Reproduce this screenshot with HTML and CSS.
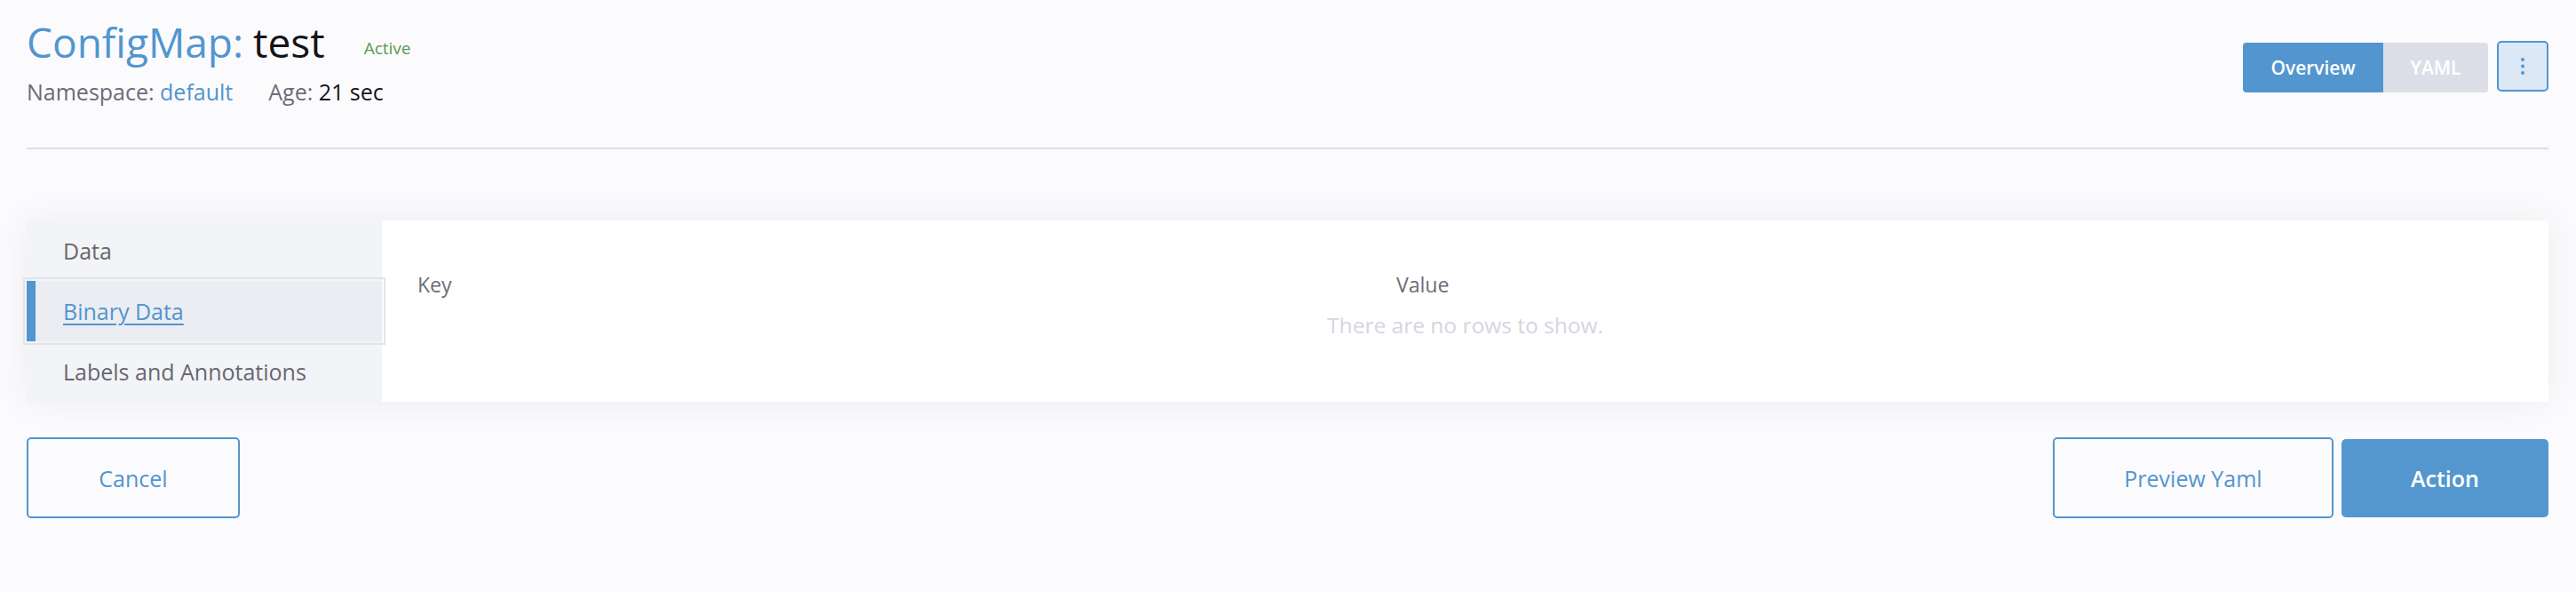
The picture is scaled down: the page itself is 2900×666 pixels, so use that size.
FILE: index.html
```html
<!DOCTYPE html>
<html lang="en">
<head>
<meta charset="utf-8">
<title>ConfigMap: test</title>
<link rel="stylesheet" href="styles.css">
</head>
<body>
<main class="page">
  <header class="masthead">
    <div class="title-block">
      <h1 class="title"><span class="kind">ConfigMap:</span> <span class="name">test</span><span class="badge">Active</span></h1>
      <div class="subtitle">
        <span class="meta">Namespace: <a class="link" href="#">default</a></span>
        <span class="meta">Age: <span class="value">21 sec</span></span>
      </div>
    </div>
    <div class="actions">
      <div class="segmented">
        <button class="seg seg-on">Overview</button>
        <button class="seg seg-off">YAML</button>
      </div>
      <button class="more" aria-label="More actions">
        <svg width="6" height="22" viewBox="0 0 6 22"><circle cx="3" cy="3" r="2" fill="#5295cf"/><circle cx="3" cy="10.5" r="2" fill="#5295cf"/><circle cx="3" cy="18" r="2" fill="#5295cf"/></svg>
      </button>
    </div>
  </header>
  <div class="divider"></div>
  <section class="tabbed">
    <nav class="tabs">
      <a class="tab" href="#">Data</a>
      <a class="tab tab-active" href="#">Binary Data</a>
      <a class="tab" href="#">Labels and Annotations</a>
    </nav>
    <div class="tab-body">
      <div class="table-head">
        <span class="col-key">Key</span>
        <span class="col-value">Value</span>
      </div>
      <div class="empty">There are no rows to show.</div>
    </div>
  </section>
  <footer class="footer">
    <button class="btn btn-outline btn-cancel">Cancel</button>
    <div class="footer-right">
      <button class="btn btn-outline btn-preview">Preview Yaml</button>
      <button class="btn btn-solid btn-action">Action</button>
    </div>
  </footer>
</main>
</body>
</html>
```
FILE: styles.css
```css
* { box-sizing: border-box; }
html, body { margin: 0; padding: 0; }
body {
  background: #fbfbfd;
  font-family: "Open Sans", Lato, "Liberation Sans", sans-serif;
  color: #141419;
}
.page {
  padding: 0 31px 0 30px;
}
.masthead {
  display: flex;
  justify-content: space-between;
  align-items: flex-start;
  height: 166px;
  padding-top: 18px;
}
.title {
  margin: 0;
  font-size: 46px;
  font-weight: 400;
  line-height: 58px;
  display: flex;
  align-items: baseline;
}
.kind { color: #5295cf; }
.name { color: #141419; margin-left: 11px; }
.badge {
  color: #5b9a52;
  font-size: 19px;
  margin-left: 44px;
  position: relative;
  top: -4px;
}
.subtitle {
  display: flex;
  gap: 40px;
  margin-top: 0;
  font-size: 25px;
  line-height: 32px;
}
.meta { color: #6c6c76; }
.link { color: #5295cf; text-decoration: none; }
.value { color: #141419; }
.actions {
  display: flex;
  align-items: flex-start;
  gap: 10px;
  padding-top: 28px;
}
.segmented {
  display: flex;
  margin-top: 2px;
  border-radius: 4px;
  overflow: hidden;
}
.seg {
  border: 0;
  height: 56px;
  font-family: inherit;
  font-size: 21px;
  font-weight: 600;
  color: #fff;
  padding: 0;
}
.seg-on { background: #5396cf; width: 158px; }
.seg-off { background: #dcdfe7; width: 118px; }
.more {
  width: 58px;
  height: 57px;
  border: 2px solid #5295cf;
  border-radius: 5px;
  background: #dce8f5;
  display: flex;
  align-items: center;
  justify-content: center;
  padding: 0;
}
.divider {
  height: 2px;
  background: #dcdee5;
}
.tabbed {
  display: flex;
  margin-top: 80px;
  height: 204px;
  box-shadow: 0 0 40px rgba(20, 20, 60, 0.06);
}
.tabs {
  width: 400px;
  background: #f3f4f8;
  display: flex;
  flex-direction: column;
}
.tab {
  height: 68px;
  display: flex;
  align-items: center;
  padding-left: 41px;
  font-size: 25px;
  color: #67676f;
  text-decoration: none;
}
.tab-active {
  background: #ecedf2;
  border-left: 10px solid #5396cf;
  padding-left: 31px;
  color: #5295cf;
  text-decoration: underline;
  text-underline-offset: 4px;
  text-decoration-thickness: 2px;
  outline: 2px solid #e3e4ea;
  outline-offset: 2px;
  position: relative;
}
.tab-body {
  flex: 1;
  background: #fff;
  padding: 0 40px;
}
.table-head {
  display: grid;
  grid-template-columns: 1102px 1fr;
  padding-top: 56px;
  font-size: 23px;
  line-height: 32px;
  color: #6c6c76;
}
.empty {
  text-align: center;
  margin-top: 14px;
  font-size: 24.5px;
  line-height: 32px;
  color: #d4d6df;
}
.footer {
  display: flex;
  justify-content: space-between;
  align-items: flex-start;
  margin-top: 40px;
}
.footer-right {
  display: flex;
  gap: 9px;
  align-items: center;
}
.btn {
  font-family: inherit;
  font-size: 25px;
  border-radius: 5px;
  padding: 0;
}
.btn-outline {
  height: 91px;
  background: transparent;
  border: 2px solid #5295cf;
  color: #5295cf;
}
.btn-cancel { width: 240px; }
.btn-preview { width: 316px; }
.btn-solid {
  height: 88px;
  border: 0;
  background: #5497cf;
  color: #fff;
  font-weight: 600;
}
.btn-action { width: 233px; }
```
